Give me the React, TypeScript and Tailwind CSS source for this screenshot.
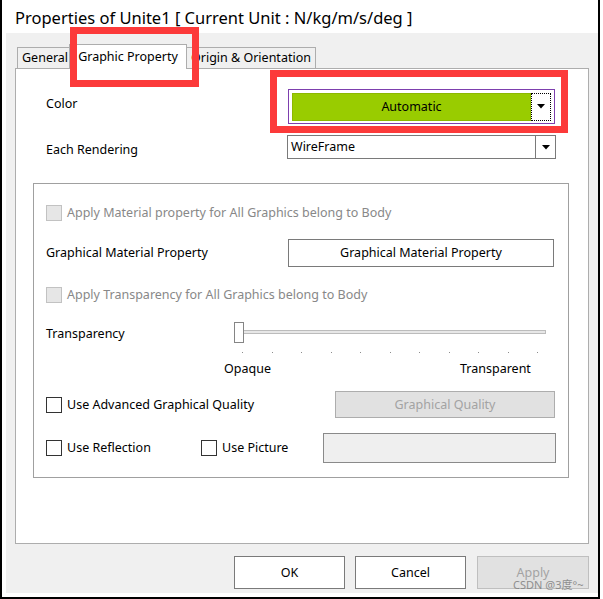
import React from "react";

const font = { fontFamily: '"Noto Sans", "Noto Sans CJK SC", sans-serif' };

function Arrow() {
  return (
    <svg width="8" height="5" viewBox="0 0 8 5">
      <polygon points="0,0 8,0 4,4.5" fill="#000" />
    </svg>
  );
}

function Check({ disabled }: { disabled?: boolean }) {
  return (
    <div
      className={
        disabled
          ? "w-[16px] h-[16px] border border-[#c2c2c2] bg-[#e6e6e6] shrink-0"
          : "w-[16px] h-[16px] border border-[#333333] bg-white shrink-0"
      }
    />
  );
}

export default function App() {
  const ticks = Array.from({ length: 11 }, (_, i) => 8 + i * 29.5);
  return (
    <div
      className="relative w-[603px] h-[599px] bg-white text-[12.5px] text-black leading-none"
      style={font}
    >
      <div className="w-[600px] h-[599px] border-l-2 border-r-2 border-b-2 border-black bg-white flex flex-col pl-[4px] pr-0 pb-[4px]">
        {/* title */}
        <div className="h-[33px] flex items-center pl-[9px] pt-[4px] text-[16.5px] text-black shrink-0">
          Properties of Unite1 [ Current Unit : N/kg/m/s/deg ]
        </div>
        {/* client */}
        <div className="flex-1 bg-[#f0f0f0] flex flex-col pl-[9px] pr-[9px] pt-[11px]">
          {/* tabs */}
          <div className="flex items-end h-[24px] pl-[2px] relative z-10">
            <div className="h-[21px] w-[53px] border border-b-0 border-[#adadad] bg-[#f0f0f0] flex items-center pl-[4px] pt-[1px]">
              General
            </div>
            <div className="h-[25px] w-[118px] -ml-[1px] -mb-[1px] border border-b-0 border-[#adadad] bg-white flex items-center justify-center relative z-10">
              Graphic Property
            </div>
            <div className="h-[21px] w-[130px] -ml-[1px] border border-b-0 border-[#adadad] bg-[#f0f0f0] flex items-center pl-[4px] pt-[1px]">
              Origin &amp; Orientation
            </div>
          </div>
          {/* panel */}
          <div className="w-[574px] h-[476px] border border-[#adadad] bg-white flex flex-col pt-[20px]">
            {/* color row */}
            <div className="flex items-center h-[35px] pl-[30px] pr-[33px]">
              <div className="flex-1 -mt-[4px]">Color</div>
              <div className="w-[267px] h-[35px] border border-[#7d3fae] flex items-center pl-[3px] pr-[2px]">
                <div className="w-[239px] h-[28px] bg-[#99cc00] border border-[#8cb800] flex items-center justify-center pt-[1px]">
                  Automatic
                </div>
                <div className="w-[20px] h-[28px] border border-dotted border-black flex items-center justify-center">
                  <Arrow />
                </div>
              </div>
            </div>
            {/* rendering row */}
            <div className="flex items-center h-[24px] mt-[11px] pl-[30px] pr-[32px]">
              <div className="flex-1 mt-[7px]">Each Rendering</div>
              <div className="w-[269px] h-[24px] border border-[#7a7a7a] flex items-center">
                <div className="flex-1 pl-[3px] pt-[1px]">WireFrame</div>
                <div className="w-[20px] h-full border-l border-[#7a7a7a] flex items-center justify-center">
                  <Arrow />
                </div>
              </div>
            </div>
            {/* group box */}
            <div className="ml-[17px] mt-[24px] w-[536px] h-[295px] border border-[#a0a0a0] flex flex-col pl-[12px]">
              <div className="flex items-center h-[16px] mt-[21px] gap-[5px] text-[#888888]">
                <Check disabled />
                <span className="pt-[1px]">Apply Material property for All Graphics belong to Body</span>
              </div>
              <div className="flex items-center h-[28px] mt-[18px] pr-[14px]">
                <div className="flex-1 pt-[1px]">Graphical Material Property</div>
                <div className="w-[266px] h-[28px] border border-[#7a7a7a] bg-white flex items-center justify-center pt-[1px]">
                  Graphical Material Property
                </div>
              </div>
              <div className="flex items-center h-[16px] mt-[20px] gap-[5px] text-[#888888]">
                <Check disabled />
                <span className="pt-[1px]">Apply Transparency for All Graphics belong to Body</span>
              </div>
              <div className="flex items-center h-[21px] mt-[19px] pr-[22px]">
                <div className="flex-1 mt-[4px]">Transparency</div>
                <div className="w-[312px] h-[21px] relative flex items-center">
                  <div className="absolute left-[8px] right-0 top-[8px] h-[4px] border border-[#bcbcbc] bg-[#e7e7e7]" />
                  <div className="absolute left-0 top-0 w-[10px] h-[21px] border border-[#858585] bg-white" />
                </div>
              </div>
              <div className="h-[1px] mt-[9px] flex justify-end pr-[22px]">
                <svg width="312" height="1">
                  {ticks.map((t, i) => (
                    <rect key={i} x={Math.round(t)} y={0} width={1} height={1} fill="#8c8c8c" />
                  ))}
                </svg>
              </div>
              <div className="h-[16px] mt-[8px] relative">
                <span className="absolute left-[178px] top-[2px]">Opaque</span>
                <span className="absolute left-[414px] top-[2px]">Transparent</span>
              </div>
              <div className="flex items-center h-[27px] mt-[14px] pr-[13px]">
                <div className="flex-1 flex items-center gap-[5px]">
                  <Check />
                  <span className="pt-[1px]">Use Advanced Graphical Quality</span>
                </div>
                <div className="w-[220px] h-[27px] border border-[#adadad] bg-[#e1e1e1] text-[#a3a3a3] flex items-center justify-center pt-[1px]">
                  Graphical Quality
                </div>
              </div>
              <div className="flex items-center h-[30px] mt-[15px] pr-[12px]">
                <div className="w-[155px] flex items-center gap-[5px]">
                  <Check />
                  <span className="pt-[1px]">Use Reflection</span>
                </div>
                <div className="flex-1 flex items-center gap-[5px]">
                  <Check />
                  <span className="pt-[1px]">Use Picture</span>
                </div>
                <div className="w-[233px] h-[30px] border border-[#8a8a8a] bg-[#efefef]" />
              </div>
            </div>
          </div>
          {/* buttons */}
          <div className="flex justify-end gap-[10px] mt-[12px]">
            <div className="w-[111px] h-[33px] border border-[#7a7a7a] bg-white flex items-center justify-center pt-[1px]">
              OK
            </div>
            <div className="w-[111px] h-[33px] border border-[#7a7a7a] bg-white flex items-center justify-center pt-[1px]">
              Cancel
            </div>
            <div className="w-[112px] h-[33px] border border-[#bfbfbf] bg-[#e1e1e1] text-[#a3a3a3] flex items-center justify-center ml-[1px] pt-[1px]">
              Apply
            </div>
          </div>
        </div>
      </div>
      {/* red annotation boxes */}
      <div className="absolute left-[70px] top-[27px] w-[129px] h-[60px] border-[7px] border-[#fc3a3a] z-20" />
      <div className="absolute left-[270px] top-[70px] w-[298px] h-[63px] border-[7px] border-[#fc3a3a] z-20" />
      {/* watermark */}
      <div className="absolute left-[513px] top-[579px] text-[11px] text-[#7a7a7a] opacity-80 z-30">
        CSDN @3度°~
      </div>
    </div>
  );
}
